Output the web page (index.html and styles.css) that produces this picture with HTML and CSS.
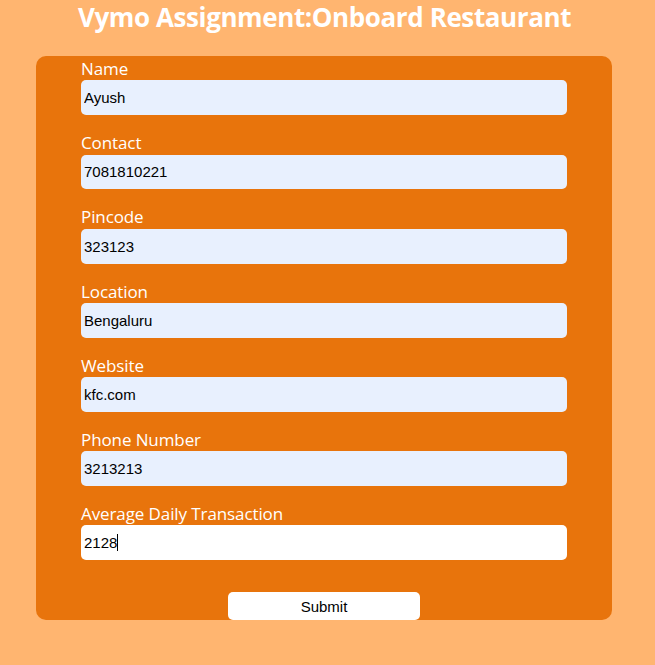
FILE: index.html
```html
<!DOCTYPE html>
<html lang="en">

<head>
    <meta charset="UTF-8">
    <meta name="viewport" content="width=device-width, initial-scale=1.0">
    <title>Onboard Restaurant</title>
    <link rel="stylesheet" href="styles.css">
</head>

<body>
    <h1 class="title">Vymo Assignment:Onboard Restaurant</h1>
    <form class="card">
        <label class="field-label">Name</label>
        <input class="field filled" type="text" value="Ayush">
        <label class="field-label">Contact</label>
        <input class="field filled" type="text" value="7081810221">
        <label class="field-label">Pincode</label>
        <input class="field filled" type="text" value="323123">
        <label class="field-label">Location</label>
        <input class="field filled" type="text" value="Bengaluru">
        <label class="field-label">Website</label>
        <input class="field filled" type="text" value="kfc.com">
        <label class="field-label">Phone Number</label>
        <input class="field filled" type="text" value="3213213">
        <label class="field-label">Average Daily Transaction</label>
        <div class="field focused">2128<span class="caret"></span></div>
        <button class="submit" type="button">Submit</button>
    </form>
</body>

</html>
```

FILE: styles.css
```css
* {
    margin: 0;
    padding: 0;
    box-sizing: border-box;
}

body {
    background-color: #ffb570;
    font-family: "Open Sans", "Noto Sans", sans-serif;
    width: 655px;
    height: 665px;
    overflow: hidden;
}

.title {
    color: white;
    font-size: 26px;
    font-weight: 700;
    line-height: 34px;
    text-align: center;
    margin-left: -6px;
    letter-spacing: -0.4px;
}

.card {
    display: flex;
    flex-direction: column;
    align-items: flex-start;
    width: 576px;
    height: 564px;
    margin: 22px 0 0 36px;
    padding: 0 45px;
    background-color: #e8740c;
    border-radius: 10px;
}

.field-label {
    color: white;
    font-size: 17px;
    font-weight: 400;
    line-height: 24px;
    height: 24.45px;
    padding-top: 1px;
    letter-spacing: -0.1px;
}

.field {
    display: flex;
    align-items: center;
    width: 486px;
    height: 35px;
    margin-bottom: 15px;
    padding: 0 3px;
    border: none;
    outline: none;
    border-radius: 5px;
    font-family: "Liberation Sans", Arial, sans-serif;
    font-size: 15px;
    color: black;
}

.filled {
    background-color: #e8f0fe;
}

.focused {
    background-color: white;
}

.caret {
    display: inline-block;
    width: 1px;
    height: 17px;
    background-color: black;
}

.submit {
    align-self: center;
    width: 192px;
    height: 28px;
    margin-top: 17px;
    border: none;
    border-radius: 5px;
    background-color: white;
    font-family: "Liberation Sans", Arial, sans-serif;
    font-size: 15px;
    color: black;
}
```
